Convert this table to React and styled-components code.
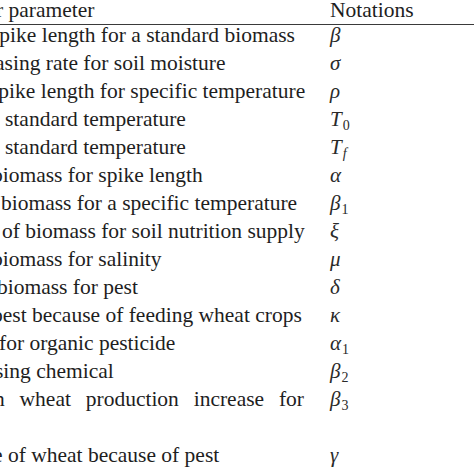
import React from "react";
import styled, { createGlobalStyle } from "styled-components";

const Global = createGlobalStyle`
  html, body { margin: 0; padding: 0; background: #ffffff; }
  body { overflow: hidden; width: 474px; height: 474px; }
`;

const Table = styled.div`
  width: 474px;
  font-family: "Liberation Serif", "Times New Roman", serif;
  font-size: 21.5px;
  color: #1e1e1e;
`;

const Row = styled.div`
  display: grid;
  grid-template-columns: 304px 1fr;
  column-gap: 26px;
  height: ${(p) => p.$lines * 28}px;
  line-height: 20px;
`;

const HeadRow = styled.div`
  display: grid;
  grid-template-columns: 304px 1fr;
  column-gap: 26px;
  line-height: 20px;
  padding-bottom: 4px;
  border-bottom: 1.5px solid #3a3a3a;
`;

const Desc = styled.div`
  white-space: ${(p) => (p.$justify ? "normal" : "nowrap")};
  text-indent: ${(p) => p.$shift}px;
  text-align: ${(p) => (p.$justify ? "justify" : "left")};
  text-align-last: ${(p) => (p.$justify ? "justify" : "auto")};
`;

const Notation = styled.div`
  white-space: nowrap;
`;

const Sym = styled.span`
  font-family: "Liberation Serif", "DejaVu Serif", serif;
  font-style: italic;
  font-size: 21px;
  color: #2a2a2a;
`;

const Sub = styled.span`
  font-family: "Liberation Serif", serif;
  font-style: ${(p) => (p.$italic ? "italic" : "normal")};
  font-size: 14px;
  position: relative;
  top: 4px;
  margin-left: 1px;
`;

const rows = [
  { text: "spike length for a standard biomass", shift: -9, sym: "β" },
  { text: "asing rate for soil moisture", shift: -5, sym: "σ" },
  { text: "spike length for specific temperature", shift: -10, sym: "ρ" },
  { text: "standard temperature", shift: 5, sym: "T", sub: "0" },
  { text: "standard temperature", shift: 5, sym: "T", sub: "f", subItalic: true },
  { text: "biomass for spike length", shift: -8, sym: "α" },
  { text: "biomass for a specific temperature", shift: 1, sym: "β", sub: "1" },
  { text: "of biomass for soil nutrition supply", shift: 2, sym: "ξ" },
  { text: "biomass for salinity", shift: -8, sym: "μ" },
  { text: "biomass for pest", shift: -3, sym: "δ" },
  { text: "pest because of feeding wheat crops", shift: -8, sym: "κ" },
  { text: "for organic pesticide", shift: -1, sym: "α", sub: "1" },
  { text: "sing chemical", shift: -5, sym: "β", sub: "2" },
  { text: "n wheat production increase for", shift: -6, sym: "β", sub: "3", lines: 2, justify: true },
  { text: "e of wheat because of pest", shift: -7, sym: "γ" },
];

export default function App() {
  return (
    <>
      <Global />
      <Table>
        <HeadRow>
          <Desc $shift={-4}>r parameter</Desc>
          <Notation>Notations</Notation>
        </HeadRow>
        {rows.map((r, i) => (
          <Row key={i} $lines={r.lines || 1}>
            <Desc $shift={r.shift} $justify={r.justify}>
              {r.text}
            </Desc>
            <Notation>
              <Sym>
                {r.sym}
                {r.sub && <Sub $italic={r.subItalic}>{r.sub}</Sub>}
              </Sym>
            </Notation>
          </Row>
        ))}
      </Table>
    </>
  );
}
